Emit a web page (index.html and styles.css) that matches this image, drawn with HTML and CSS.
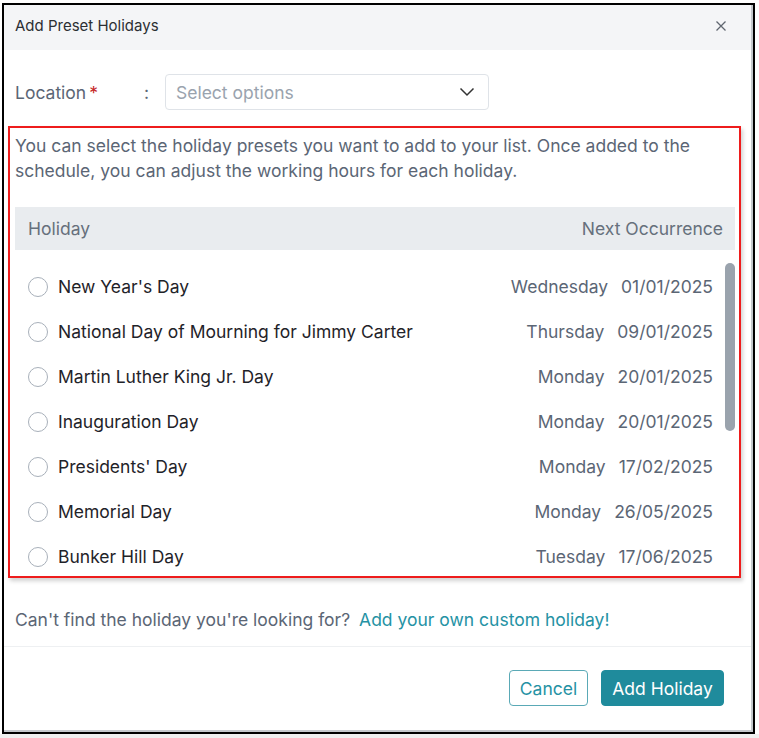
FILE: index.html
```html
<!DOCTYPE html>
<html>
<head>
<meta charset="utf-8">
<link rel="stylesheet" href="styles.css">
</head>
<body>
<div class="frame">
  <div class="dialog">
    <div class="header">
      <span class="title">Add Preset Holidays</span>
      <svg class="close" width="12" height="12" viewBox="0 0 12 12"><path d="M1.5 1.5 L10.5 10.5 M10.5 1.5 L1.5 10.5" stroke="#5f6670" stroke-width="1.3" fill="none"/></svg>
    </div>
    <div class="content">
      <div class="loc-row">
        <span class="loc-label">Location<span class="req">*</span></span>
        <span class="colon">:</span>
        <div class="select">
          <span class="placeholder">Select options</span>
          <svg class="chev" width="16" height="10" viewBox="0 0 16 10"><path d="M1.5 1.5 L8 8 L14.5 1.5" stroke="#333" stroke-width="1.5" fill="none"/></svg>
        </div>
      </div>
      <div class="box">
        <p class="desc">You can select the holiday presets you want to add to your list. Once added to the schedule, you can adjust the working hours for each holiday.</p>
        <div class="thead"><span>Holiday</span><span>Next Occurrence</span></div>
        <div class="list">
          <div class="rows">
            <div class="row"><span class="radio"></span><span class="name">New Year's Day</span><span class="day">Wednesday</span><span class="date">01/01/2025</span></div>
            <div class="row"><span class="radio"></span><span class="name">National Day of Mourning for Jimmy Carter</span><span class="day">Thursday</span><span class="date">09/01/2025</span></div>
            <div class="row"><span class="radio"></span><span class="name">Martin Luther King Jr. Day</span><span class="day">Monday</span><span class="date">20/01/2025</span></div>
            <div class="row"><span class="radio"></span><span class="name">Inauguration Day</span><span class="day">Monday</span><span class="date">20/01/2025</span></div>
            <div class="row"><span class="radio"></span><span class="name">Presidents' Day</span><span class="day">Monday</span><span class="date">17/02/2025</span></div>
            <div class="row"><span class="radio"></span><span class="name">Memorial Day</span><span class="day">Monday</span><span class="date">26/05/2025</span></div>
            <div class="row"><span class="radio"></span><span class="name">Bunker Hill Day</span><span class="day">Tuesday</span><span class="date">17/06/2025</span></div>
          </div>
          <div class="thumb"></div>
        </div>
      </div>
      <p class="hint">Can't find the holiday you're looking for? <span class="link">Add your own custom holiday!</span></p>
    </div>
    <div class="footer">
      <button class="btn btn-outline">Cancel</button>
      <button class="btn btn-primary">Add Holiday</button>
    </div>
  </div>
</div>
</body>
</html>
```
FILE: styles.css
```css
html, body {
  margin: 0;
  padding: 0;
}
body {
  background: linear-gradient(to bottom, #ffffff 0, #ffffff 734px, #f0f0f0 734px);
  min-height: 738px;
  font-family: Inter, "Noto Sans", sans-serif;
  overflow: hidden;
}
.frame {
  margin: 3px 0 0 2px;
  width: 753px;
  height: 731px;
  box-sizing: border-box;
  border: 2px solid #000;
  background: #c4c8cc;
  padding: 0 2px 2px 0;
  display: flex;
}
.dialog {
  flex: 1;
  background: #fff;
  display: flex;
  flex-direction: column;
}
.header {
  height: 45px;
  box-sizing: border-box;
  background: #f4f5f7;
  display: flex;
  align-items: center;
  justify-content: space-between;
  padding: 0 24px 4px 11px;
  flex-shrink: 0;
}
.title {
  font-size: 15px;
  color: #2c2f33;
}
.content {
  padding: 24px 0 0 11px;
  flex: 1;
}
.loc-row {
  display: flex;
  align-items: center;
  height: 36px;
}
.loc-label {
  font-size: 17.5px;
  color: #5b6675;
  width: 129px;
}
.req {
  color: #c62828;
  margin-left: 3px;
}
.colon {
  font-size: 17.5px;
  color: #5b6675;
  width: 21px;
}
.select {
  width: 324px;
  height: 36px;
  box-sizing: border-box;
  border: 1px solid #dfe3e8;
  border-radius: 4px;
  display: flex;
  align-items: center;
  justify-content: space-between;
  padding: 0 13px 0 10px;
}
.placeholder {
  font-size: 17.5px;
  color: #9aa3ae;
}
.box {
  margin: 16px 0 0 -7px;
  width: 733px;
  height: 452px;
  box-sizing: border-box;
  border: 2px solid #ee1c1c;
  padding: 5px 4px 0 5px;
  box-shadow: 2px 3px 4px rgba(0,0,0,0.18);
  display: flex;
  flex-direction: column;
}
.desc {
  margin: 0;
  font-size: 17.5px;
  line-height: 25px;
  color: #5b6675;
}
.thead {
  margin-top: 24px;
  height: 43px;
  background: #e9ecef;
  display: flex;
  align-items: center;
  justify-content: space-between;
  padding: 0 12px 0 13px;
  font-size: 17.5px;
  color: #66707c;
  flex-shrink: 0;
}
.list {
  position: relative;
  flex: 1;
  overflow: hidden;
}
.rows {
  padding: 14px 22px 0 13px;
}
.row {
  height: 45px;
  display: flex;
  align-items: center;
  font-size: 17.5px;
}
.radio {
  width: 18px;
  height: 18px;
  border: 1px solid #a8b0ba;
  border-radius: 50%;
  flex-shrink: 0;
}
.name {
  margin-left: 10px;
  color: #1f2329;
  flex: 1;
}
.day {
  color: #5b6675;
}
.date {
  color: #5b6675;
  margin-left: 13px;
}
.thumb {
  position: absolute;
  right: 0;
  top: 13px;
  width: 10px;
  height: 168px;
  border-radius: 5px;
  background: #9aa3ad;
}
.hint {
  margin: 29px 0 0;
  font-size: 17.5px;
  line-height: 25px;
  color: #5b6675;
}
.link {
  color: #2592a4;
  margin-left: 4px;
}
.footer {
  border-top: 1px solid #eef0f2;
  padding: 23px 27px 24px 0;
  display: flex;
  justify-content: flex-end;
  gap: 13px;
}
.btn {
  height: 36px;
  border-radius: 4px;
  font-family: Inter, "Noto Sans", sans-serif;
  font-size: 17.5px;
  padding: 0;
  box-sizing: border-box;
}
.btn-outline {
  background: #fff;
  border: 1px solid #5aa9b6;
  color: #2592a4;
  width: 79px;
}
.btn-primary {
  background: #1f8b9c;
  border: 1px solid #1f8b9c;
  color: #fff;
  width: 123px;
}
```
